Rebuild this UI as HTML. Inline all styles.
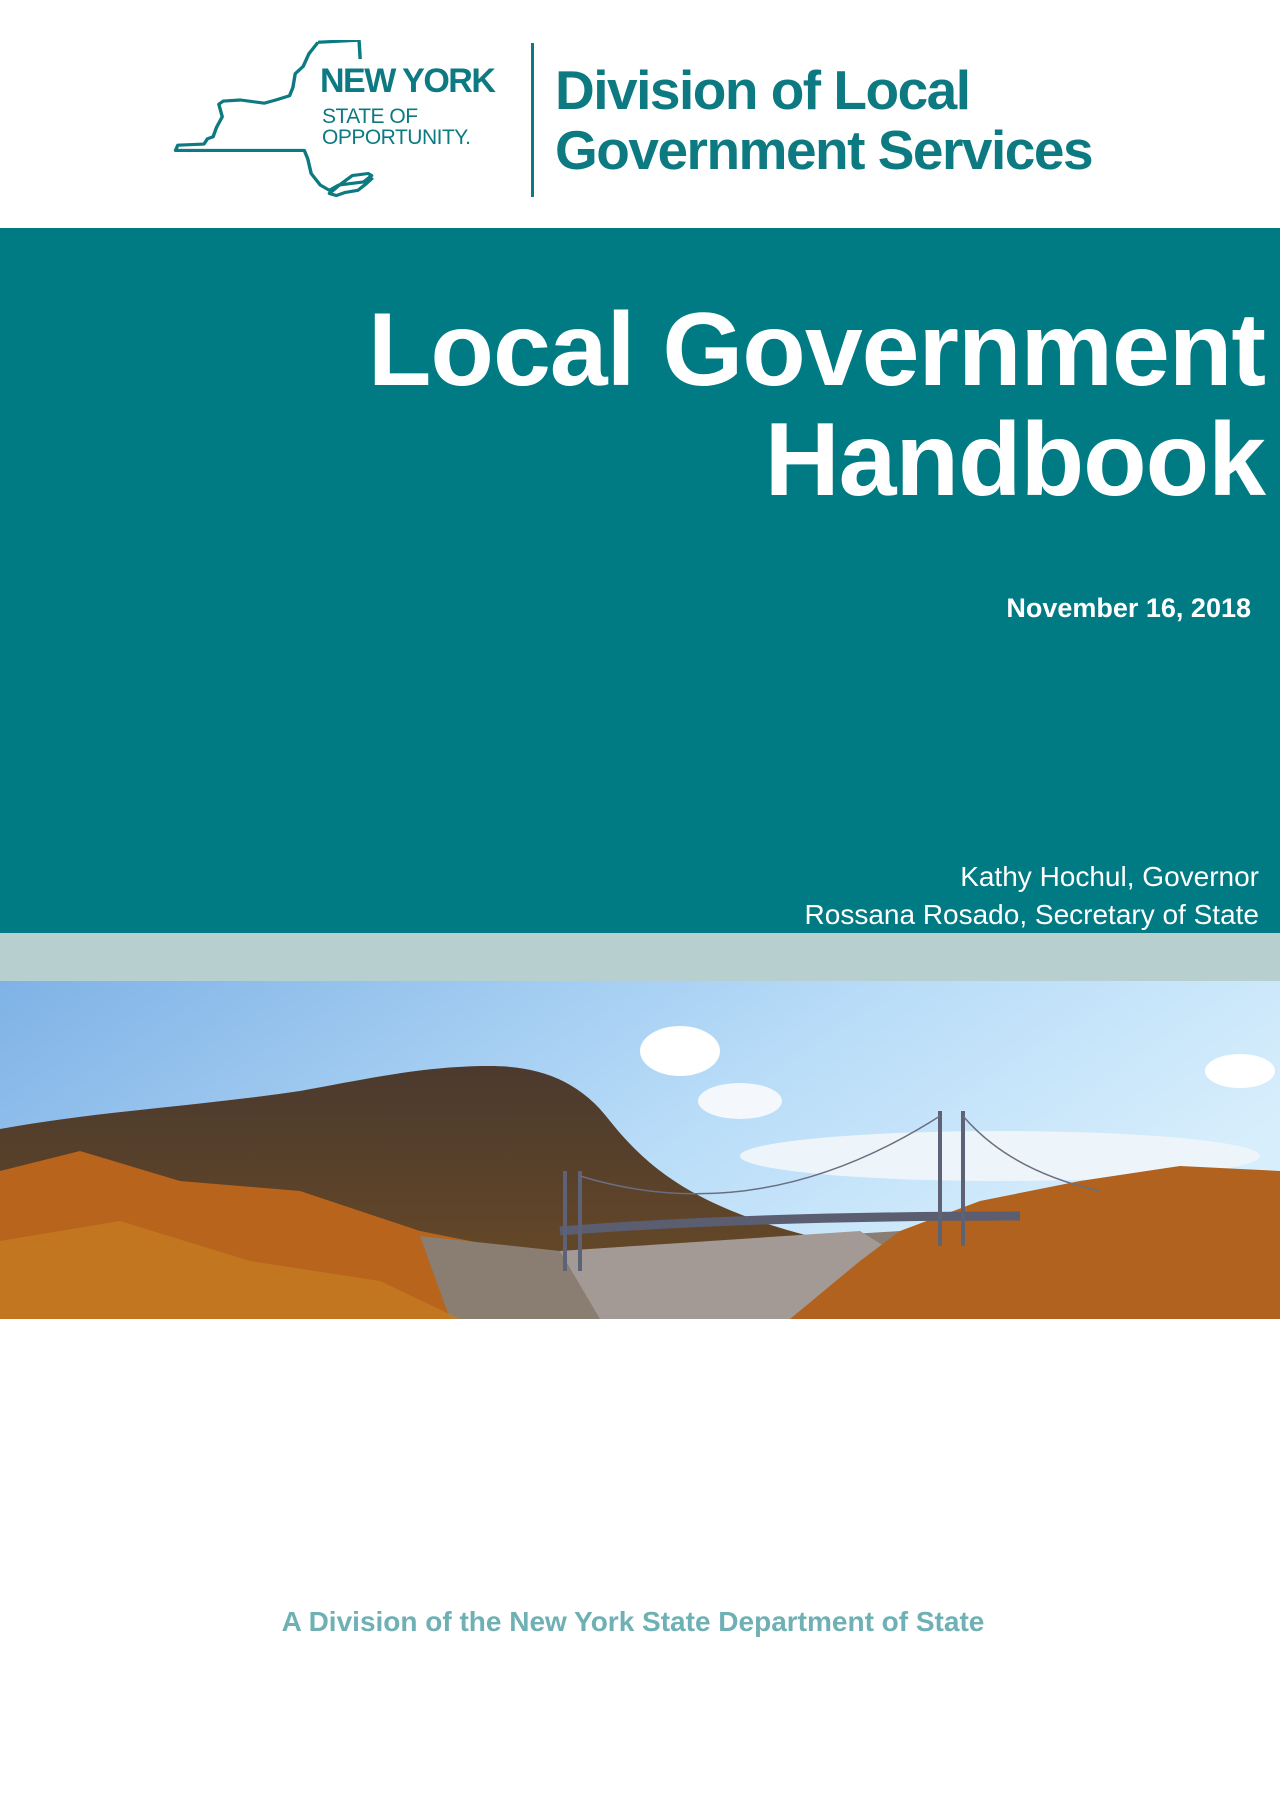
<!DOCTYPE html>
<html><head><meta charset="utf-8"><style>
body{margin:0;width:1280px;height:1811px;background:#fff;position:relative;overflow:hidden;font-family:"Liberation Sans",sans-serif}
.a{position:absolute}
.teal{color:#0d7a82}
</style></head><body>
<svg class="a" style="left:170px;top:40px" width="210" height="160" viewBox="170 40 210 160">
<path d="M300 45 L336 43 L337 61 M300 45 L292 56 L287 68 L280 75 L278 88 L275 96 L263 100 L253 103 L232 100 L217 101 L213 104 L216 116 L211 126 L208 135 L203 137 L200 142 L177 143 L175 148 L288 148 L291 156 L294 170 L302 181 L310 186 L318 181 L340 178 L347 172 L344 170 L330 172 L320 180 L310 189 L316 191 L324 188 L335 186 L342 180 L348 174" fill="none" stroke="#0d7a82" stroke-width="3" stroke-linejoin="round" transform="translate(-24,-5) scale(1.14,1.05)"/>
</svg>
<div class="a teal" style="left:320px;top:64px;font-weight:bold;font-size:34px;letter-spacing:-1.5px;line-height:34px">NEW YORK</div>
<div class="a teal" style="left:322px;top:106px;font-size:21px;line-height:21px;letter-spacing:-0.5px">STATE OF<br>OPPORTUNITY.</div>
<div class="a" style="left:531px;top:43px;width:3px;height:154px;background:#0d7a82"></div>
<div class="a teal" style="left:555px;top:60px;font-weight:bold;font-size:55px;line-height:60px;letter-spacing:-1.5px;white-space:nowrap">Division of Local<br>Government Services</div>
<div class="a" style="left:0;top:228px;width:1280px;height:705px;background:#007b84"></div>
<div class="a" style="right:15px;top:295px;color:#fff;font-weight:bold;font-size:104px;line-height:110px;text-align:right;letter-spacing:-1px">Local Government<br>Handbook</div>
<div class="a" style="right:29px;top:593px;color:#fff;font-weight:bold;font-size:27px">November 16, 2018</div>
<div class="a" style="right:21px;top:858px;color:#fff;font-size:28px;line-height:38px;text-align:right">Kathy Hochul, Governor<br>Rossana Rosado, Secretary of State</div>
<div class="a" style="left:0;top:933px;width:1280px;height:48px;background:#b7cfcf"></div>
<svg class="a" style="left:0;top:981px" width="1280" height="338" viewBox="0 0 1280 338">
<defs><linearGradient id="s" x1="0" y1="0" x2="1" y2="0.4"><stop offset="0" stop-color="#7fb2e6"/><stop offset="0.6" stop-color="#b8dcf8"/><stop offset="1" stop-color="#d7eefc"/></linearGradient>
<linearGradient id="m" x1="0" y1="0" x2="0" y2="1"><stop offset="0" stop-color="#4b3a2e"/><stop offset="1" stop-color="#6a4a26"/></linearGradient></defs>
<rect width="1280" height="338" fill="url(#s)"/>
<ellipse cx="680" cy="70" rx="40" ry="25" fill="#fff"/><ellipse cx="740" cy="120" rx="42" ry="18" fill="#f4f8fc"/><ellipse cx="1240" cy="90" rx="35" ry="17" fill="#fff"/>
<ellipse cx="1000" cy="175" rx="260" ry="25" fill="#eef5fa"/>
<path d="M0 148 C100 130 200 125 300 110 C380 95 430 85 490 85 C540 85 580 100 610 140 C650 190 700 230 830 260 L800 290 L0 320Z" fill="url(#m)"/>
<path d="M0 190 L80 170 L180 200 L300 210 L420 250 L520 270 L560 338 L0 338Z" fill="#b8641c"/>
<path d="M420 255 L560 270 L820 255 L900 250 L860 300 L780 338 L450 338Z" fill="#8a7e72"/>
<path d="M560 270 L860 250 L900 275 L800 338 L600 338Z" fill="#a39a96"/>
<path d="M790 338 L860 280 L900 250 L980 220 L1080 200 L1180 185 L1280 190 L1280 338Z" fill="#b0621e"/>
<path d="M0 260 L120 240 L250 280 L380 300 L460 338 L0 338Z" fill="#c57a22" opacity=".8"/>
<path d="M560 250 Q750 235 1020 235" fill="none" stroke="#5a5e70" stroke-width="9"/>
<g stroke="#5e6276" stroke-width="4"><line x1="565" y1="190" x2="565" y2="290"/><line x1="580" y1="190" x2="580" y2="290"/><line x1="940" y1="130" x2="940" y2="265"/><line x1="963" y1="130" x2="963" y2="265"/></g>
<g stroke="#6a6e80" stroke-width="1.5" fill="none"><path d="M580 195 Q760 250 940 135"/><path d="M963 135 Q1010 190 1100 210"/></g>
</svg>
<div class="a" style="left:0;top:1606px;width:1266px;text-align:center;color:#6fb0b5;font-weight:bold;font-size:28px">A Division of the New York State Department of State</div>
</body></html>
